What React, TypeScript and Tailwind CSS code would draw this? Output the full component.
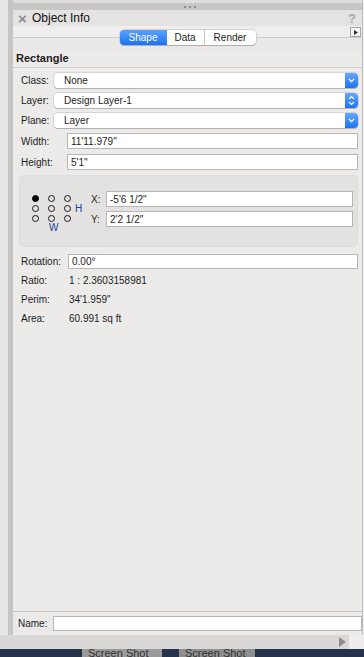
import React from "react";

function Chevron({ stepper }: { stepper?: boolean }) {
  return (
    <span className="w-[13px] shrink-0 rounded-r-[4px] bg-gradient-to-b from-[#62a9fc] to-[#1c6ff1] flex items-center justify-center">
      {stepper ? (
        <svg width="7" height="11" viewBox="0 0 7 11" fill="none" stroke="white" strokeWidth="1.2">
          <path d="M1 4 L3.5 1.5 L6 4" />
          <path d="M1 7 L3.5 9.5 L6 7" />
        </svg>
      ) : (
        <svg width="7" height="5" viewBox="0 0 7 5" fill="none" stroke="white" strokeWidth="1.3">
          <path d="M1 1 L3.5 3.6 L6 1" />
        </svg>
      )}
    </span>
  );
}

function PopUp({ label, value, stepper }: { label: string; value: string; stepper?: boolean }) {
  return (
    <div className="flex items-center h-[15px] pl-[2px]">
      <span className="w-[33px] shrink-0">{label}</span>
      <div className="flex-1 h-[15px] flex rounded-[4px] bg-white shadow-[0_0_0_0.5px_#bdbcbb,0_1px_0.5px_#a9a8a7]">
        <span className="flex-1 pl-[10px] leading-[15px]">{value}</span>
        <Chevron stepper={stepper} />
      </div>
    </div>
  );
}

function Field({ label, value, labelW = "w-[46px]", h = "h-[16px]" }: { label: string; value: string; labelW?: string; h?: string }) {
  return (
    <div className="flex items-center pl-[2px]">
      <span className={`${labelW} shrink-0`}>{label}</span>
      <div className={`flex-1 ${h} bg-white border border-[#b8b7b6] pl-[3px] flex items-center`}>{value}</div>
    </div>
  );
}

function Info({ label, value }: { label: string; value: string }) {
  return (
    <div className="flex items-center h-[19px] pl-[2px]">
      <span className="w-[48px] shrink-0">{label}</span>
      <span>{value}</span>
    </div>
  );
}

function Dot({ filled }: { filled?: boolean }) {
  return (
    <span
      className={
        filled
          ? "w-[7px] h-[7px] rounded-full bg-black border border-black"
          : "w-[7px] h-[7px] rounded-full border border-[#1a1a1a] bg-transparent"
      }
    />
  );
}

export default function App() {
  return (
    <div className="w-[364px] h-[657px] overflow-hidden flex flex-col bg-[#e8e7e6] text-[10px] text-[#1c1c1c] font-['Liberation_Sans',Arial,sans-serif]">
      <div className="flex h-[638px]">
        {/* left window edge */}
        <div className="w-[8px] bg-[#e7e6e5]" />
        <div className="w-[5px] bg-[#c6c5c4]" />

        {/* panel */}
        <div className="w-[350px] flex flex-col border-r border-[#bcbbba] bg-[#ecebea]">
          {/* drag band */}
          <div className="h-[10px] flex flex-col">
            <div className="h-[3px] bg-[#dfdedd]" />
            <div className="flex-1 bg-[#c8c7c6] flex items-center justify-center gap-[3px] pl-[4px]">
              <span className="w-[2px] h-[2px] rounded-full bg-[#7a7a7a]" />
              <span className="w-[2px] h-[2px] rounded-full bg-[#7a7a7a]" />
              <span className="w-[2px] h-[2px] rounded-full bg-[#7a7a7a]" />
            </div>
          </div>

          {/* title */}
          <div className="h-[16px] bg-[#e4e3e2] flex items-center pl-[5px] pr-[6px]">
            <span className="w-[14px] text-[15px] font-bold text-[#8e8e8e] leading-none">×</span>
            <span className="text-[12px] text-[#111]">Object Info</span>
            <span className="ml-auto text-[13px] font-bold text-[#a9a9a9] leading-none">?</span>
          </div>

          {/* tabs */}
          <div className="relative h-[24px] bg-[linear-gradient(to_bottom,#efeeed_12px,#e9e8e7_12px)] pt-[4px]">
            <div className="flex items-center h-[15px]">
              <div className="flex-1 h-px bg-[#cfcecd]" />
              <div className="flex h-[15px] rounded-[4px] bg-white shadow-[0_0_0_0.5px_#b5b4b3,0_1px_0.5px_#a9a8a7] text-[10px]">
                <span className="w-[47px] rounded-l-[4px] bg-gradient-to-b from-[#5aa3fb] to-[#1b70f2] text-white flex items-center justify-center">Shape</span>
                <span className="w-[38px] border-r border-[#c9c8c7] flex items-center justify-center">Data</span>
                <span className="w-[51px] flex items-center justify-center">Render</span>
              </div>
              <div className="flex-1 h-px bg-[#cfcecd]" />
            </div>
            <div className="absolute right-[1px] top-[1px] w-[11px] h-[10px] border border-[#a6a5a4] bg-[#f4f4f4] flex items-center justify-center">
              <svg width="4" height="5" viewBox="0 0 4 5">
                <path d="M0 0 L4 2.5 L0 5 Z" fill="#333" />
              </svg>
            </div>
          </div>

          {/* header */}
          <div className="h-[18px] border-b border-[#cfcecd] flex items-end pl-[3px] pb-[2px]">
            <span className="text-[11px] font-bold leading-[14px]">Rectangle</span>
          </div>

          {/* body */}
          <div className="flex-1 flex flex-col pl-[6px] pr-[4px] pt-[5px]">
            <PopUp label="Class:" value="None" />
            <div className="mt-[5px]">
              <PopUp label="Layer:" value="Design Layer-1" stepper />
            </div>
            <div className="mt-[5px]">
              <PopUp label="Plane:" value="Layer" />
            </div>
            <div className="mt-[5px]">
              <Field label="Width:" value={"11'11.979\""} />
            </div>
            <div className="mt-[5px]">
              <Field label="Height:" value={"5'1\""} />
            </div>

            {/* position box */}
            <div className="mt-[5px] h-[72px] rounded-[5px] bg-[#e3e2e1] border border-[#dddcdb] flex items-start pl-[12px] pr-[4px] pt-[15px]">
              <div className="w-[59px] shrink-0 pt-[4px] flex flex-col">
                <div className="flex items-center">
                  <div className="grid grid-cols-3 gap-x-[9px] gap-y-[3px]">
                    <Dot filled />
                    <Dot />
                    <Dot />
                    <Dot />
                    <Dot />
                    <Dot />
                    <Dot />
                    <Dot />
                    <Dot />
                  </div>
                  <span className="ml-[4px] text-[#1b3f9e]">H</span>
                </div>
                <span className="ml-[17px] w-[7px] text-center text-[#1b3f9e] leading-[12px]">W</span>
              </div>
              <div className="flex-1 flex flex-col gap-[4px]">
                <div className="flex items-center">
                  <span className="w-[15px] shrink-0">X:</span>
                  <div className="flex-1 h-[16px] bg-white border border-[#b8b7b6] pl-[3px] flex items-center">-5'6 1/2"</div>
                </div>
                <div className="flex items-center">
                  <span className="w-[15px] shrink-0 text-[#3a2a10]">Y:</span>
                  <div className="flex-1 h-[16px] bg-white border border-[#b8b7b6] pl-[3px] flex items-center">2'2 1/2"</div>
                </div>
              </div>
            </div>

            <div className="mt-[7px]">
              <Field label="Rotation:" value="0.00°" labelW="w-[47px]" h="h-[15px]" />
            </div>
            <div className="mt-[2px]">
              <Info label="Ratio:" value="1 : 2.3603158981" />
              <Info label="Perim:" value={"34'1.959\""} />
              <Info label="Area:" value="60.991 sq ft" />
            </div>
          </div>

          {/* name */}
          <div className="h-[24px] border-t border-[#c9c8c7] bg-[#ebeae9] flex items-center pl-[5px]">
            <span className="w-[35px] shrink-0">Name:</span>
            <div className="flex-1 h-[15px] bg-white border border-[#b8b7b6]" />
          </div>
        </div>
        <div className="w-px bg-[#f2f2f2]" />
      </div>

      {/* bottom scroll bar */}
      <div className="h-[14px] flex">
        <div className="w-[349px] bg-[#d9d8d7] flex items-center justify-end pr-[3px]">
          <svg width="7" height="10" viewBox="0 0 7 10">
            <path d="M0 0 L7 5 L0 10 Z" fill="#8c8c8c" />
          </svg>
        </div>
        <div className="flex-1 bg-[#eeedec]" />
      </div>

      {/* desktop behind */}
      <div className="flex-1 bg-[#26324a] flex items-start">
        <div className="w-[82px]" />
        <div className="w-[80px] h-full bg-[#9a9a9a] overflow-hidden text-[11px] leading-[8px] text-[#333] pl-[6px]">Screen Shot</div>
        <div className="w-[17px]" />
        <div className="w-[76px] h-full bg-[#8f8f8f] overflow-hidden text-[11px] leading-[8px] text-[#333] pl-[6px]">Screen Shot</div>
      </div>
    </div>
  );
}
